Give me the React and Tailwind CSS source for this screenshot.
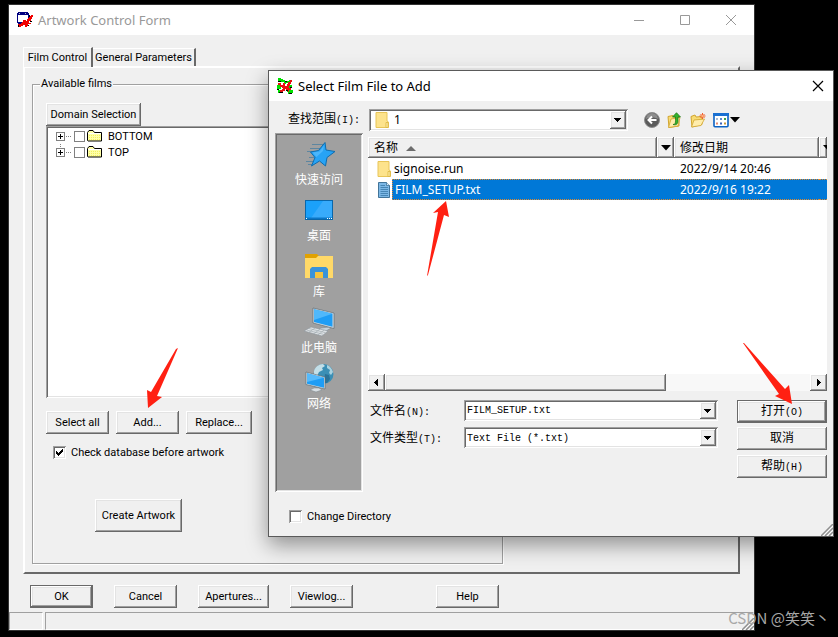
import { useState } from 'react';
import clsx from 'clsx';

const raised =
  'bg-[#f0f0f0] shadow-[inset_-1px_-1px_0_#696969,inset_1px_1px_0_#fff,inset_-2px_-2px_0_#a0a0a0,inset_2px_2px_0_#e3e3e3]';
const sunken =
  'shadow-[inset_1px_1px_0_#a0a0a0,inset_-1px_-1px_0_#fff,inset_2px_2px_0_#696969,inset_-2px_-2px_0_#e3e3e3]';
const defaultRaised =
  'bg-[#f0f0f0] border border-[#696969] shadow-[inset_-1px_-1px_0_#696969,inset_1px_1px_0_#fff,inset_-2px_-2px_0_#a0a0a0,inset_2px_2px_0_#e3e3e3]';

const uiFont = 'font-[Roboto,"Liberation_Sans",sans-serif] text-[11px] leading-[14px]';
const titleFont = 'font-["Noto_Sans","Noto_Sans_CJK_SC",sans-serif] text-[13px] leading-[16px]';
const listFont = 'font-["Noto_Sans","Noto_Sans_CJK_SC",sans-serif] text-[12px] leading-[16px]';
const songFont = 'font-["Liberation_Mono","Noto_Sans_CJK_SC",monospace] text-[12px] leading-[16px]';

const films = ['BOTTOM', 'TOP'];

const files = [
  { name: 'signoise.run', date: '2022/9/14 20:46', type: 'folder' },
  { name: 'FILM_SETUP.txt', date: '2022/9/16 19:22', type: 'text' },
];

/* ---------- icons ---------- */

const ArtworkIcon = () => (
  <svg viewBox="0 0 16 16" className="size-4 shrink-0" shapeRendering="crispEdges">
    <path d="M1 0h10v1h1v10h-1v1H1v-1H0V1h1z" fill="#000080" />
    <path d="M1 3h10v7H1z" fill="#fff" />
    <path d="M2 1h1v1H2zM8 1h1v1H8z" fill="#c0c0c0" />
    <path d="M12 3h1v2h-1zM1 13h2v2H1zM13 9h2v1h-2zM10 13h2v1h-2z" fill="#000" />
    <path
      d="M14 3h2v2h-1v2h-1v2h-2v2h2v1h-3v2h-1v1H8v-2H6v1H4v1H2v-2H1v-1h3v-1h1v-1h1V8h3v1h1V7h1V6h1V5h1V4h1z"
      fill="#f00000"
    />
  </svg>
);

const BoardIcon = () => (
  <svg viewBox="0 0 16 16" className="size-4 shrink-0" shapeRendering="crispEdges">
    <path
      d="M1 0h3v1h2v1h2v1h4V2h3v2h-2v1H9v1H7V4H4V3H1zM0 7h3v1h1v3H2v1H0zM1 12h5v2H4v1H1zM12 7h3v2h-2v1h-1zM10 11h3v1h3v3h-3v1h-2v-2h-1z"
      fill="#00e000"
    />
    <path d="M1 3h3v1H1zM8 3h2v1H8zM0 11h2v1H0zM2 14h4v1H2zM12 15h3v1h-3zM13 9h2v1h-2zM9 12h2v1H9z" fill="#000" />
    <path
      d="M13 2h2v2h-1v2h-1v2h-1v2h2v2h-2v2h-1v-2H9v-1H8v2H6v1H3v-2h2v-1h1v-1H5V9H3V7H1V5h3v2h2V5h2v3h2V6h1V4h2z"
      fill="#e81010"
    />
  </svg>
);

const FolderIcon = () => (
  <svg viewBox="0 0 14 16" className="h-4 w-[14px] shrink-0">
    <path d="M1 .5h11v8.5l1.500 1v5.500H1z" fill="#fde38c" stroke="#e8c558" />
    <path d="M11 10.500h2v5h-2z" fill="#fff0b0" stroke="#dcb53c" strokeWidth=".8" />
  </svg>
);

const TextFileIcon = () => (
  <svg viewBox="0 0 14 16" className="h-4 w-[14px] shrink-0">
    <path d="M1.500.5h8l3 3v12h-11z" fill="#7db8e6" stroke="#34688f" strokeWidth=".9" />
    <path d="M9.500.5v3h3" fill="#d4e9f8" stroke="#34688f" strokeWidth=".7" />
    <path d="M3.500 3.500H8M3.500 5.500H11M3.500 7.500H11M3.500 9.500H11M3.500 11.500H11M3.500 13.500H11" stroke="#3a78a8" strokeWidth=".8" />
  </svg>
);

const TreeFolderIcon = () => (
  <svg viewBox="0 0 15 12" className="h-3 w-[15px] shrink-0">
    <path d="M.5 10.500v-8l1.500-2h4l1.500 2h7v8.500H1z" fill="#ffffa8" stroke="#000" />
    <path d="M1 3.500h13" stroke="#fff" />
    <path d="M2 5.500h12M2 7.500h12M2 9.500h12" stroke="#f2f060" strokeDasharray="1 1" />
  </svg>
);

const QuickAccessIcon = () => (
  <svg viewBox="0 0 32 32" className="size-8">
    <path d="M9 5.500h11M7 9.500h10M4 12.500h6M6 18.500h7M3 22.500h9M5 25.500h6" stroke="#4b7fa0" strokeWidth=".8" />
    <path
      d="M22 3.500 23 11l9 1.500-8 6 -1.500 8.500-6-5L8.500 27l3.500-8.500L7.500 13l8-1.500z"
      fill="#27a3f5"
      stroke="#0f6cae"
      strokeWidth="1"
      strokeLinejoin="round"
    />
    <path d="M21 6.500 16.500 12.500 9.500 13.500 13.500 18 20 12z" fill="#4bb6fb" />
  </svg>
);

const DesktopIcon = () => (
  <svg viewBox="0 0 32 32" className="size-8">
    <rect x="2.500" y="5.500" width="27" height="19" fill="#1ba1fa" stroke="#0a67aa" />
    <path d="M20 6h9v17H8z" fill="#38abfb" />
    <path d="M3 22.500h26v1.500H3z" fill="#0b77c7" />
    <path d="M3 23.500h1M24 23.500h1M26 23.500h1M28 23.500h1" stroke="#fff" />
  </svg>
);

const LibraryIcon = () => (
  <svg viewBox="0 0 32 32" className="size-8">
    <path d="M2 3h12l2 2h14v6H2z" fill="#e1a100" />
    <path d="M2 7h11l2-2h15v22H2z" fill="#ffd968" />
    <path d="M7 27V18l2-2h14l2 2v9h-5v-6h-8v6z" fill="#3a93da" />
    <path d="M12 21h8v6h-8z" fill="#f5c33f" />
  </svg>
);

const ComputerIcon = () => (
  <svg viewBox="0 0 32 32" className="size-8">
    <path d="M14 23l4-2 8-1 2 1-5 3-6 1z" fill="#c9d3da" stroke="#77858f" strokeWidth=".5" />
    <path d="M10 1l21 5v15.500L10 16z" fill="#d0d8dd" stroke="#56636c" strokeWidth=".6" />
    <path d="M11 2.300l18.500 4.500v13L11 15z" fill="#1e9df5" />
    <path d="M11 2.300l18.500 4.500L11 13z" fill="#50b8fb" />
    <path d="M8 20l17 4-6 5L1 24z" fill="#dfe3e6" stroke="#8b949a" strokeWidth=".6" />
    <path d="M6 21.500l16.500 4.200M3.500 23l16.500 4.200M12 21l-6 4.200M17 22.200l-6 4.300M21 23.200l-6 4.600" stroke="#9ba4aa" strokeWidth=".6" />
  </svg>
);

const NetworkIcon = () => (
  <svg viewBox="0 0 32 32" className="size-8">
    <circle cx="20.500" cy="11" r="10" fill="#3b8fb5" />
    <path d="M11 8c1-4 5-7 9-7l2 2-3 2 1 2-4 2-2 4-3-1z" fill="#c3dfe8" />
    <path d="M24 2c3 1 5 4 6 7l-2 3-2-2 1-3-3-2z" fill="#a9d2e0" />
    <path d="M22 11l4 1 1 4-3 4h-3z" fill="#2a7298" />
    <path d="M7 27l4-2h5l3 2-6 2z" fill="#d8dee2" stroke="#7a868d" strokeWidth=".5" />
    <path d="M3 9l19 5v12L3 21.500z" fill="#d6dde1" stroke="#55646d" strokeWidth=".6" />
    <path d="M4 10.200l17 4.500v10L4 20.700z" fill="#1e9df5" />
    <path d="M4 10.200l17 4.500L4 19z" fill="#54bafc" />
  </svg>
);

const BackIcon = () => (
  <svg viewBox="0 0 16 16" className="size-4">
    <circle cx="8" cy="8" r="7.500" fill="#5c5c5c" stroke="#8e8e8e" />
    <path d="M2 7a6 6 0 0 1 12 0c-3-2-8-2-12 0z" fill="#8d8d8d" />
    <path d="M12.500 8H5M8 4.500 4.500 8 8 11.500" fill="none" stroke="#fff" strokeWidth="2" />
  </svg>
);

const UpIcon = () => (
  <svg viewBox="0 0 16 16" className="size-4">
    <path d="M1 4.500l5-1 1 1.500h5v9l-10 1.500z" fill="#f8dc74" stroke="#d1a52f" />
    <path d="M1.500 15.500 4 7l9-1.500-2 8.500z" fill="#ffedac" stroke="#d1a52f" strokeWidth=".8" />
    <path d="M6 12.500c2.500 0 2.500-2 2.500-4V5H5.500L9.500.7 13.500 5H11v4c0 3-2 4.500-5 3.500z" fill="#35b32a" stroke="#157012" strokeWidth=".7" />
  </svg>
);

const NewFolderIcon = () => (
  <svg viewBox="0 0 16 16" className="size-4">
    <path d="M1 4.500 5 3l1 2 6-.5v8L2 15z" fill="#f8dc74" stroke="#d1a52f" />
    <path d="M1.500 15 4 8l10.500-1L11 13.500z" fill="#ffedac" stroke="#d1a52f" strokeWidth=".8" />
    <path d="M12.500 1v6M9.500 4h6M10.500 2l4 4M14.500 2l-4 4" stroke="#f05a28" />
    <circle cx="12.500" cy="4" r="1.200" fill="#ffb27a" />
  </svg>
);

const ViewIcon = () => (
  <svg viewBox="0 0 16 16" className="size-4">
    <rect x="1" y="1.800" width="14" height="13" rx="1" fill="#fff" stroke="#0c62c4" strokeWidth="1.600" />
    <path d="M0 1h16v3H0z" fill="#1a70d2" />
    <path d="M3 6h2v2H3z" fill="#a8bcd4" />
    <path d="M7 6h2v2H7z" fill="#5a88d0" />
    <path d="M11 6h2v2h-2z" fill="#39a24c" />
    <path d="M3 10.500h2v2H3z" fill="#e28a70" />
    <path d="M7 10.500h2v2H7z" fill="#3b61b8" />
    <path d="M11 10.500h2v2h-2z" fill="#c79a3c" />
  </svg>
);

const Triangle = ({ dir = 'down' }) => (
  <svg viewBox="0 0 8 8" className="size-2" shapeRendering="crispEdges">
    {dir === 'down' && <path d="M0 2h7v1H6v1H5v1H4v1H3V5H2V4H1V3H0z" />}
    {dir === 'left' && <path d="M5 0v7H4V6H3V5H2V4H1V3h1V2h1V1h1V0z" />}
    {dir === 'right' && <path d="M2 0v7h1V6h1V5h1V4h1V3H5V2H4V1H3V0z" />}
  </svg>
);

const WideTriangle = () => (
  <svg viewBox="0 0 10 6" className="h-[6px] w-[10px]">
    <path d="M0 0h10L5 5.500z" />
  </svg>
);

const Grip = () => (
  <svg viewBox="0 0 12 12" className="absolute bottom-0 right-0 size-3">
    <path d="M0 12 12 0M4 12l8-8M8 12l4-4" stroke="#8f8f8f" strokeWidth="1.500" />
    <path d="M2 12 12 2M6 12l6-6M10 12l2-2" stroke="#fff" strokeWidth=".8" />
  </svg>
);

const Arrow = ({ points, className }) => (
  <svg viewBox="0 0 52 76" className={clsx('pointer-events-none absolute h-[76px] w-[52px]', className)}>
    <polygon points={points} fill="#ff2012" />
  </svg>
);

/* ---------- controls ---------- */

const Button = ({ children, isDefault, className }) => (
  <button className={clsx('whitespace-nowrap pt-[1px] text-center', isDefault ? defaultRaised : raised, className)}>
    {children}
  </button>
);

const CheckBox = ({ label, defaultChecked }) => (
  <label className={clsx('flex items-center gap-[5px]', uiFont)}>
    <span className="relative flex">
      <input
        type="checkbox"
        defaultChecked={defaultChecked}
        className={clsx('peer size-[13px] appearance-none bg-white', sunken)}
      />
      <svg viewBox="0 0 13 13" className="pointer-events-none absolute inset-0 hidden size-[13px] peer-checked:block" shapeRendering="crispEdges">
        <path d="M3 5h1v1h1v1h1V6h1V5h1V4h1V3h1v3H9v1H8v1H7v1H6v1H5V9H4V8H3z" />
      </svg>
    </span>
    <span className="pt-[1px]">{label}</span>
  </label>
);

const DropArrow = () => (
  <span className={clsx('pointer-events-none absolute bottom-[2px] right-[2px] top-[2px] flex w-4 items-center justify-center', raised)}>
    <Triangle />
  </span>
);

const SongLabel = ({ text, hotkey, htmlFor, className }) => (
  <label htmlFor={htmlFor} className={clsx('whitespace-nowrap', songFont, className)}>
    {text}
    <span className="text-[10px]">({hotkey}):</span>
  </label>
);

const places = [
  { label: '快速访问', icon: QuickAccessIcon },
  { label: '桌面', icon: DesktopIcon },
  { label: '库', icon: LibraryIcon },
  { label: '此电脑', icon: ComputerIcon },
  { label: '网络', icon: NetworkIcon },
];

const FileDialog = () => {
  const [selected, setSelected] = useState('FILM_SETUP.txt');

  return (
    <section className="absolute left-[268px] right-1 top-[70px] border border-[#5a5a5a] bg-[#f0f0f0] shadow-[0_8px_20px_0_rgba(0,0,0,0.4)]">
      <header className="flex h-[30px] items-center gap-[5px] bg-white pl-2 pr-[9px]">
        <BoardIcon />
        <h2 className={clsx('flex-1', titleFont)}>Select Film File to Add</h2>
        <button aria-label="Close">
          <svg viewBox="0 0 12 12" className="size-3">
            <path d="M1 1l10 10M11 1 1 11" stroke="#000" strokeWidth="1.200" />
          </svg>
        </button>
      </header>

      <div className="px-[6px] pt-2">
        {/* Look in */}
        <div className="flex items-center">
          <SongLabel htmlFor="lookIn" text="查找范围" hotkey="I" className="w-[94px] pl-[13px]" />
          <div className="relative w-[259px]">
            <select id="lookIn" className={clsx('block h-[22px] w-full appearance-none bg-white pl-[25px]', listFont, sunken)}>
              <option>1</option>
            </select>
            <span className="pointer-events-none absolute left-[6px] top-[3px]">
              <FolderIcon />
            </span>
            <DropArrow />
          </div>
          <div className="ml-4 flex items-center gap-[7px]">
            <button aria-label="Back"><BackIcon /></button>
            <button aria-label="Up one level"><UpIcon /></button>
            <button aria-label="New folder"><NewFolderIcon /></button>
            <button aria-label="View" className="flex items-center gap-[1px]">
              <ViewIcon />
              <WideTriangle />
            </button>
          </div>
        </div>

        <div className="mt-[2px] flex gap-[5px]">
          {/* Places bar */}
          <nav className={clsx('w-[88px] shrink-0 bg-[#a0a0a0] pt-[6px]', sunken)}>
            {places.map((place) => (
              <button key={place.label} className={clsx('flex h-14 w-full flex-col items-center text-white', listFont)}>
                <place.icon />
                <span className="mt-[1px]">{place.label}</span>
              </button>
            ))}
          </nav>

          <div className="min-w-0 flex-1 pt-1">
            <div className="h-[237px] overflow-hidden bg-white">
              <table className={clsx('w-full table-fixed border-separate border-spacing-0 text-left', listFont)}>
                <colgroup>
                  <col className="w-[289px]" />
                  <col className="w-[17px]" />
                  <col className="w-[145px]" />
                  <col />
                </colgroup>
                <thead>
                  <tr className="h-[21px]">
                    <th className={clsx('p-0 pl-[6px] font-normal', raised)}>
                      <span className="flex items-center gap-2 pt-[1px]">
                        名称
                        <svg viewBox="0 0 10 5" className="h-[5px] w-[10px]">
                          <path d="M0 5h10L5 0z" fill="#6d6d6d" />
                        </svg>
                      </span>
                    </th>
                    <th className={clsx('p-0', raised)}>
                      <span className="flex justify-center"><WideTriangle /></span>
                    </th>
                    <th className={clsx('p-0 pl-[6px] pt-[1px] font-normal', raised)}>修改日期</th>
                    <th className={clsx('overflow-hidden p-0 pl-1', raised)}>
                      <WideTriangle />
                    </th>
                  </tr>
                </thead>
                <tbody>
                  {files.map((file) => {
                    const active = selected === file.name;
                    const cell = active
                      ? 'bg-[#0078d7] text-white border-y border-dotted border-[#e08a30]'
                      : 'border-y border-transparent';
                    return (
                      <tr key={file.name} className="h-[21px]" onClick={() => setSelected(file.name)}>
                        <td className="p-0">
                          <span className="flex items-center pl-[9px]">
                            {file.type === 'folder' ? <FolderIcon /> : <TextFileIcon />}
                            <span className={clsx('ml-[1px] h-[21px] flex-1 pl-[2px] pt-[2px]', cell, active && 'border-l')}>
                              {file.name}
                            </span>
                          </span>
                        </td>
                        <td className={clsx('p-0', cell)} />
                        <td className={clsx('p-0 pl-[6px] pt-[1px]', cell)}>{file.date}</td>
                        <td className={clsx('p-0', cell)} />
                      </tr>
                    );
                  })}
                </tbody>
              </table>
            </div>

            {/* Horizontal scrollbar */}
            <div className="flex h-[17px] bg-[#f8f8f8]">
              <button aria-label="Scroll left" className={clsx('flex w-[17px] items-center justify-center', raised)}>
                <Triangle dir="left" />
              </button>
              <div className={clsx('w-[281px]', raised)} />
              <button aria-label="Scroll right" className={clsx('ml-auto flex w-[17px] items-center justify-center', raised)}>
                <Triangle dir="right" />
              </button>
            </div>

            <div className="mt-[9px] flex">
              <div className="flex flex-1 flex-col gap-[6px]">
                <div className="flex items-center">
                  <SongLabel htmlFor="fileName" text="文件名" hotkey="N" className="w-24 pl-[2px] pt-[3px]" />
                  <div className="relative flex-1">
                    <input
                      id="fileName"
                      defaultValue="FILM_SETUP.txt"
                      className={clsx('block h-[21px] w-full bg-white pl-[3px] font-["Liberation_Mono",monospace] text-[10px]', sunken)}
                    />
                    <DropArrow />
                  </div>
                </div>
                <div className="flex items-center">
                  <SongLabel htmlFor="fileType" text="文件类型" hotkey="T" className="w-24 pl-[2px] pt-[3px]" />
                  <div className="relative flex-1">
                    <select
                      id="fileType"
                      className={clsx('block h-[21px] w-full appearance-none bg-white pl-[3px] pt-[1px] font-["Liberation_Mono",monospace] text-[10px]', sunken)}
                    >
                      <option>Text File (*.txt)</option>
                    </select>
                    <DropArrow />
                  </div>
                </div>
              </div>
              <div className={clsx('ml-[19px] flex w-[90px] flex-col gap-1', songFont)}>
                <Button isDefault className="h-[23px]">打开<span className="text-[10px]">(O)</span></Button>
                <Button className="h-[23px]">取消</Button>
                <Button className="mt-[1px] h-[23px]">帮助<span className="text-[10px]">(H)</span></Button>
              </div>
            </div>
            <div className="h-[14px]" />
          </div>
        </div>

        <div className="flex pb-3 pl-[14px] pt-[17px]">
          <CheckBox label="Change Directory" />
        </div>
      </div>
      <Grip />
    </section>
  );
};

const ArtworkForm = () => (
  <section className="relative ml-2 mr-[83px] border border-[#333] bg-[#f0f0f0]">
    <header className="flex h-[30px] items-center gap-[5px] bg-white pl-2 pr-[17px] text-[#999]">
      <ArtworkIcon />
      <h1 className={clsx('flex-1', titleFont)}>Artwork Control Form</h1>
      <div className="flex gap-[34px]">
        <button aria-label="Minimize">
          <svg viewBox="0 0 12 12" className="size-3"><path d="M1 6.500h10" stroke="currentColor" /></svg>
        </button>
        <button aria-label="Maximize">
          <svg viewBox="0 0 12 12" className="size-3"><path d="M1.500 1.500h9v9h-9z" fill="none" stroke="currentColor" /></svg>
        </button>
        <button aria-label="Close">
          <svg viewBox="0 0 12 12" className="size-3"><path d="M1 1l10 10M11 1 1 11" stroke="currentColor" /></svg>
        </button>
      </div>
    </header>

    <div className={clsx('pl-[14px] pr-[14px] pt-3', uiFont)}>
      <div className="flex items-end">
        <button className="z-10 -mb-px h-[20px] w-[70px] whitespace-nowrap border-l border-r-2 border-t border-white border-r-[#696969] bg-[#f0f0f0]">
          Film Control
        </button>
        <button className="h-[18px] w-[103px] whitespace-nowrap border-r-2 border-t border-white border-r-[#696969]">
          General Parameters
        </button>
      </div>

      <div className="border-2 border-b-[#696969] border-l-white border-r-[#696969] border-t-white pb-2 pl-[7px] pt-[9px]">
        <fieldset className="w-[471px] border border-[#a0a0a0] pb-[31px] pl-[13px] pr-3 shadow-[1px_1px_0_#fff,inset_1px_1px_0_#fff]">
          <legend className="-ml-[6px] bg-[#f0f0f0] px-[1px]">Available films</legend>
          <Button className="mt-3 h-[23px] w-[95px]">Domain Selection</Button>

          <ul className={clsx('h-[272px] bg-white pl-[10px] pt-[2px]', sunken)}>
            {films.map((film) => (
              <li key={film} className="flex h-4 items-center">
                <button aria-label={`Expand ${film}`} className="flex items-center">
                  <svg viewBox="0 0 18 16" className="h-4 w-[18px]" shapeRendering="crispEdges">
                    <rect x=".5" y="4.500" width="8" height="8" fill="#fff" stroke="#808080" />
                    <path d="M2 8.500h5M4.500 6v5" stroke="#000" />
                    <path d="M10 8.500h6" stroke="#808080" strokeDasharray="1 1" />
                    {film === 'TOP' && <path d="M4.500 0v4" stroke="#808080" strokeDasharray="1 1" />}
                  </svg>
                </button>
                <label className="flex items-center">
                  <input type="checkbox" className="size-[11px] appearance-none border border-[#808080] bg-white" />
                  <span className="ml-[2px] mr-[6px]"><TreeFolderIcon /></span>
                  <span className="pt-[1px]">{film}</span>
                </label>
              </li>
            ))}
          </ul>

          <div className="mt-[13px] flex gap-[7px]">
            <Button className="h-[23px] w-[63px]">Select all</Button>
            <Button className="h-[23px] w-[63px]">Add...</Button>
            <Button className="h-[23px] w-[66px]">Replace...</Button>
          </div>
          <div className="mt-[11px] flex pl-[7px]">
            <CheckBox label="Check database before artwork" defaultChecked />
          </div>
          <Button className="ml-[49px] mt-[39px] h-[33px] w-[87px]">Create Artwork</Button>
        </fieldset>
      </div>

      <div className="flex gap-[21px] pb-1 pl-[7px] pt-[11px]">
        <Button isDefault className="h-[23px] w-[63px]">OK</Button>
        <Button className="h-[23px] w-[63px]">Cancel</Button>
        <Button className="h-[23px] w-[71px]">Apertures...</Button>
        <Button className="h-[23px] w-[63px]">Viewlog...</Button>
        <Button className="ml-[62px] h-[23px] w-[63px]">Help</Button>
      </div>
    </div>

    <footer className="flex h-[18px] gap-[2px]">
      <div className="w-[34px] border border-b-white border-l-[#a0a0a0] border-r-white border-t-[#a0a0a0]" />
      <div className="flex-1 border border-b-white border-l-[#a0a0a0] border-r-white border-t-[#a0a0a0]" />
    </footer>
    <Grip />
  </section>
);

export default function App() {
  return (
    <main className="relative min-h-screen overflow-hidden bg-black pt-1 text-black">
      <ArtworkForm />
      <FileDialog />

      <Arrow className="left-[140px] top-[340px]" points="36,9 38,8 17,56 22,57 8,68 7,50 11,52" />
      <Arrow className="left-[410px] top-[200px]" points="17,76 18,75 34,15 39,17 36,1 23,13 28,12" />
      <Arrow className="left-[742px] top-[340px]" points="1,3 2,3 43,49 47,45 50,64 33,56 37,54" />

      <p className="absolute bottom-[9px] right-2 font-['Noto_Sans_CJK_SC',sans-serif] text-[15px] leading-5 text-[#a8a8a8]">
        CSDN @笑笑丶
      </p>
    </main>
  );
}
